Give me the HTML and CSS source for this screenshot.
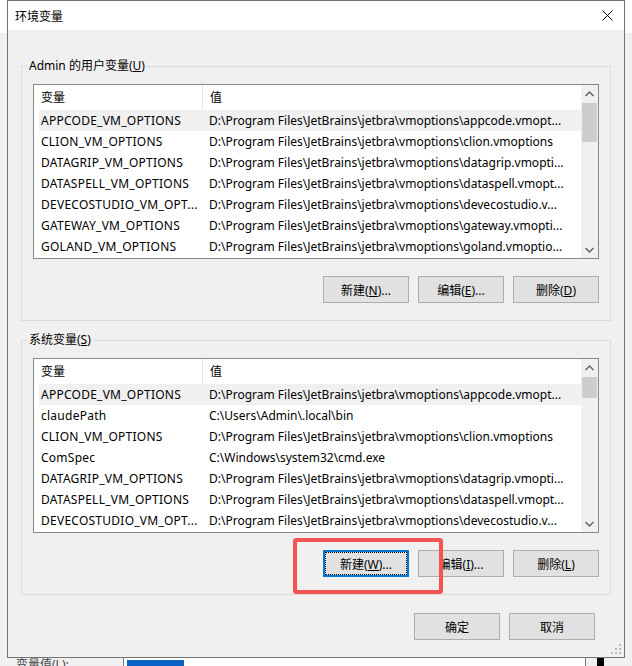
FILE: index.html
```html
<html lang="zh-CN">
<head>
    <meta charset="UTF-8">
    <meta name="viewport" content="width=device-width, initial-scale=1.0">
    <title>环境变量</title>
    <link rel="stylesheet" href="styles.css">
</head>
<body>
    <div class="dialog">
        <div class="titlebar">
            <span class="title">环境变量</span>
            <svg class="close" width="11" height="11" viewBox="0 0 11 11">
                <path d="M0.5 0.5 L10.5 10.5 M10.5 0.5 L0.5 10.5" stroke="#000" stroke-width="1" fill="none"/>
            </svg>
        </div>

        <div class="dialog-body">
            <fieldset class="group">
                <legend>Admin 的用户变量(<u>U</u>)</legend>
                <div class="list">
                    <div class="list-main">
                        <div class="list-head">
                            <div class="head-name">变量</div>
                            <div class="head-value">值</div>
                        </div>
                        <div class="row selected"><div class="cell-name">APPCODE_VM_OPTIONS</div><div class="cell-value">D:\Program Files\JetBrains\jetbra\vmoptions\appcode.vmopt...</div></div>
                        <div class="row"><div class="cell-name">CLION_VM_OPTIONS</div><div class="cell-value">D:\Program Files\JetBrains\jetbra\vmoptions\clion.vmoptions</div></div>
                        <div class="row"><div class="cell-name">DATAGRIP_VM_OPTIONS</div><div class="cell-value">D:\Program Files\JetBrains\jetbra\vmoptions\datagrip.vmopti...</div></div>
                        <div class="row"><div class="cell-name">DATASPELL_VM_OPTIONS</div><div class="cell-value">D:\Program Files\JetBrains\jetbra\vmoptions\dataspell.vmopt...</div></div>
                        <div class="row"><div class="cell-name">DEVECOSTUDIO_VM_OPT...</div><div class="cell-value">D:\Program Files\JetBrains\jetbra\vmoptions\devecostudio.v...</div></div>
                        <div class="row"><div class="cell-name">GATEWAY_VM_OPTIONS</div><div class="cell-value">D:\Program Files\JetBrains\jetbra\vmoptions\gateway.vmopti...</div></div>
                        <div class="row"><div class="cell-name">GOLAND_VM_OPTIONS</div><div class="cell-value">D:\Program Files\JetBrains\jetbra\vmoptions\goland.vmoptio...</div></div>
                    </div>
                    <div class="scrollbar">
                        <div class="arrow"><svg width="9" height="6" viewBox="0 0 9 6"><path d="M0.5 5 L4.5 1 L8.5 5" stroke="#606060" stroke-width="1.4" fill="none"/></svg></div>
                        <div class="thumb thumb-user"></div>
                        <div class="track"></div>
                        <div class="arrow"><svg width="9" height="6" viewBox="0 0 9 6"><path d="M0.5 1 L4.5 5 L8.5 1" stroke="#606060" stroke-width="1.4" fill="none"/></svg></div>
                    </div>
                </div>
                <div class="group-buttons">
                    <button>新建(<u>N</u>)...</button>
                    <button>编辑(<u>E</u>)...</button>
                    <button>删除(<u>D</u>)</button>
                </div>
            </fieldset>

            <fieldset class="group">
                <legend>系统变量(<u>S</u>)</legend>
                <div class="list">
                    <div class="list-main">
                        <div class="list-head">
                            <div class="head-name">变量</div>
                            <div class="head-value">值</div>
                        </div>
                        <div class="row selected"><div class="cell-name">APPCODE_VM_OPTIONS</div><div class="cell-value">D:\Program Files\JetBrains\jetbra\vmoptions\appcode.vmopt...</div></div>
                        <div class="row"><div class="cell-name">claudePath</div><div class="cell-value">C:\Users\Admin\.local\bin</div></div>
                        <div class="row"><div class="cell-name">CLION_VM_OPTIONS</div><div class="cell-value">D:\Program Files\JetBrains\jetbra\vmoptions\clion.vmoptions</div></div>
                        <div class="row"><div class="cell-name">ComSpec</div><div class="cell-value">C:\Windows\system32\cmd.exe</div></div>
                        <div class="row"><div class="cell-name">DATAGRIP_VM_OPTIONS</div><div class="cell-value">D:\Program Files\JetBrains\jetbra\vmoptions\datagrip.vmopti...</div></div>
                        <div class="row"><div class="cell-name">DATASPELL_VM_OPTIONS</div><div class="cell-value">D:\Program Files\JetBrains\jetbra\vmoptions\dataspell.vmopt...</div></div>
                        <div class="row"><div class="cell-name">DEVECOSTUDIO_VM_OPT...</div><div class="cell-value">D:\Program Files\JetBrains\jetbra\vmoptions\devecostudio.v...</div></div>
                    </div>
                    <div class="scrollbar">
                        <div class="arrow"><svg width="9" height="6" viewBox="0 0 9 6"><path d="M0.5 5 L4.5 1 L8.5 5" stroke="#606060" stroke-width="1.4" fill="none"/></svg></div>
                        <div class="thumb thumb-system"></div>
                        <div class="track"></div>
                        <div class="arrow"><svg width="9" height="6" viewBox="0 0 9 6"><path d="M0.5 1 L4.5 5 L8.5 1" stroke="#606060" stroke-width="1.4" fill="none"/></svg></div>
                    </div>
                </div>
                <div class="group-buttons">
                    <button class="focused">新建(<u>W</u>)...</button>
                    <button>编辑(<u>I</u>)...</button>
                    <button>删除(<u>L</u>)</button>
                </div>
            </fieldset>

            <div class="dialog-buttons">
                <button>确定</button>
                <button>取消</button>
            </div>
        </div>

        <svg class="grip" width="10" height="10" viewBox="0 0 10 10">
            <rect x="8" y="0" width="2" height="2" fill="#bcbcbc"/>
            <rect x="4" y="4" width="2" height="2" fill="#bcbcbc"/>
            <rect x="8" y="4" width="2" height="2" fill="#bcbcbc"/>
            <rect x="0" y="8" width="2" height="2" fill="#bcbcbc"/>
            <rect x="4" y="8" width="2" height="2" fill="#bcbcbc"/>
            <rect x="8" y="8" width="2" height="2" fill="#bcbcbc"/>
        </svg>
    </div>

    <div class="under">
        <span class="under-label">变量值(L):</span>
        <span class="under-field"><span class="under-sel"></span></span>
        <span class="under-black"></span>
    </div>

    <div class="mark"></div>
</body>
</html>
```

FILE: styles.css
```css
body {
    margin: 0;
    width: 632px;
    height: 666px;
    overflow: hidden;
    position: relative;
    font-family: "Noto Sans", "Noto Sans CJK SC", sans-serif;
    font-size: 12px;
    color: #000;
    background: linear-gradient(#fff 0, #fff 33px, #f0f0f0 33px);
}
.dialog {
    position: relative;
    margin-left: 7px;
    width: 618px;
    height: 658px;
    box-sizing: border-box;
    border: 1px solid #747474;
    background: #f0f0f0;
    display: flex;
    flex-direction: column;
}
.titlebar {
    height: 29px;
    flex-shrink: 0;
    background: #fff;
    display: flex;
    align-items: center;
    justify-content: space-between;
    padding: 0 11px 0 7px;
}
.title {
    font-size: 12px;
}
.dialog-body {
    padding: 28px 13px 0;
}
.group {
    margin: 0;
    padding: 10px 11px 17px;
    border: 1px solid #dcdcdc;
    min-width: 0;
}
.group + .group {
    margin-top: 11px;
}
.group legend {
    margin-left: -6px;
    padding: 0 2px;
    line-height: 16px;
}
.list {
    height: 175px;
    box-sizing: border-box;
    border: 1px solid #828790;
    background: #fff;
    display: flex;
}
.list-main {
    flex: 1;
    min-width: 0;
}
.list-head {
    display: grid;
    grid-template-columns: 169px 1fr;
    height: 25px;
}
.list-head div {
    padding-left: 7px;
    line-height: 25px;
}
.head-name {
    border-right: 1px solid #e5e5e5;
}
.row {
    display: grid;
    grid-template-columns: 163px 1fr;
    margin-left: 5px;
    height: 21px;
    line-height: 21px;
}
.row.selected {
    background: #f0f0f0;
}
.cell-name,
.cell-value {
    white-space: nowrap;
    overflow: hidden;
}
.cell-name {
    padding-left: 2px;
    letter-spacing: 0.25px;
}
.cell-value {
    padding-left: 7px;
}
.scrollbar {
    width: 17px;
    background: #f0f0f0;
    display: flex;
    flex-direction: column;
    align-items: center;
}
.arrow {
    width: 17px;
    height: 17px;
    display: flex;
    align-items: center;
    justify-content: center;
}
.thumb {
    width: 15px;
    margin-top: 1px;
    background: #cdcdcd;
}
.thumb-user {
    height: 39px;
}
.thumb-system {
    height: 21px;
}
.track {
    flex: 1;
}
.group-buttons {
    display: flex;
    justify-content: flex-end;
    gap: 9px;
    margin-top: 17px;
}
button {
    width: 86px;
    height: 27px;
    padding: 0;
    border: 1px solid #adadad;
    background: #e1e1e1;
    font: inherit;
    color: #000;
}
button.focused {
    border-color: #0078d7;
    box-shadow: inset 0 0 0 1px #0078d7;
    outline: 1px dotted #000;
    outline-offset: -3px;
}
.dialog-buttons {
    display: flex;
    justify-content: flex-end;
    gap: 9px;
    margin-top: 18px;
    padding-right: 16px;
}
.grip {
    position: absolute;
    right: 3px;
    bottom: 3px;
}
.under {
    display: flex;
    height: 8px;
    overflow: hidden;
    font-size: 12px;
    line-height: 14px;
    color: #444;
}
.under-label {
    margin-left: 16px;
    width: 107px;
}
.under-field {
    width: 458px;
    border-left: 1px solid #7a7a7a;
    border-right: 1px solid #7a7a7a;
    background: #fff;
    padding: 2px 0 0 3px;
}
.under-sel {
    display: block;
    width: 57px;
    height: 8px;
    background: #0a64c8;
}
.under-black {
    margin-left: 11px;
    width: 7px;
    background: #000;
}
.mark {
    position: absolute;
    left: 293px;
    top: 538px;
    width: 150px;
    height: 56px;
    box-sizing: border-box;
    border: 4px solid #f45353;
    border-radius: 3px;
}
```
